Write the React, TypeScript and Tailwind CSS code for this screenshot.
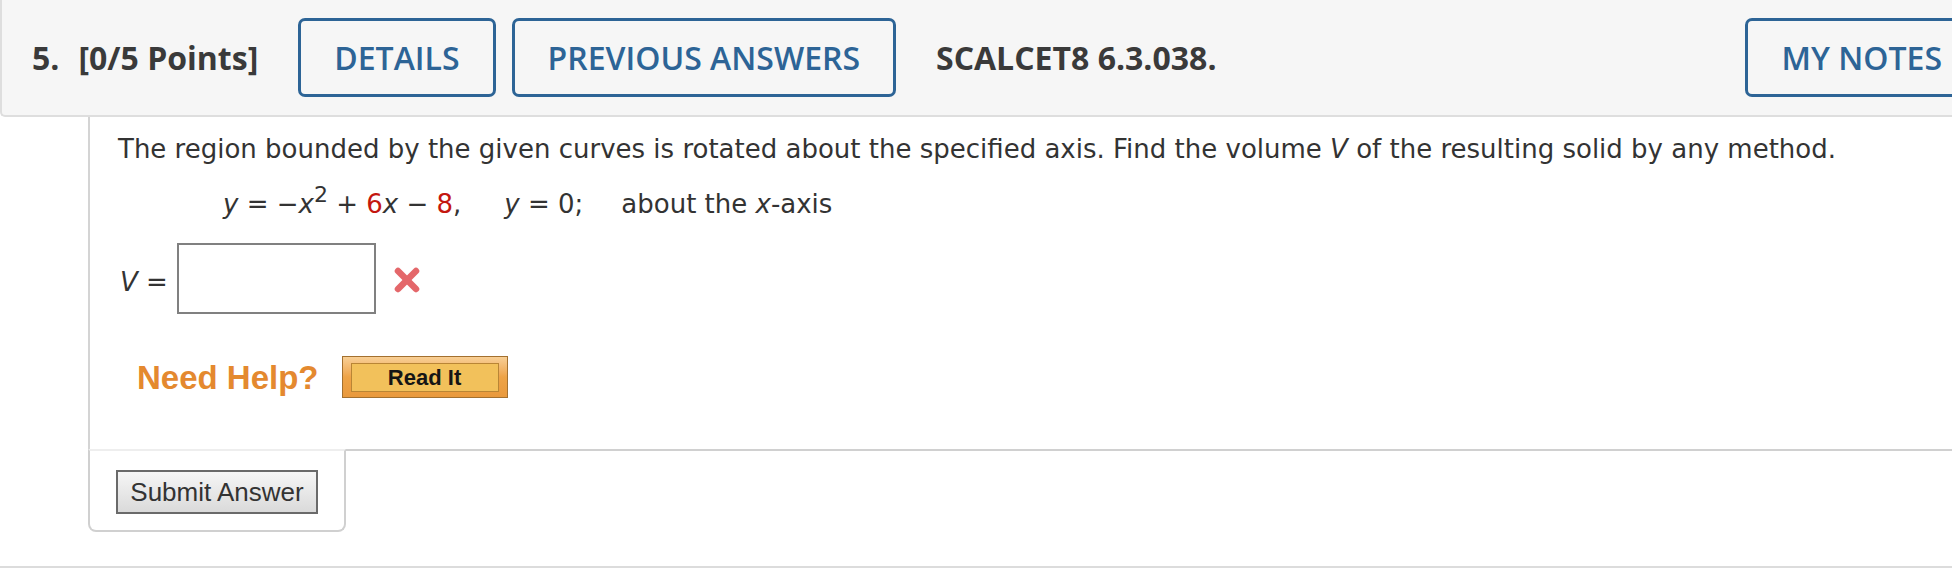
export default function App() {
  return (
    <div className="w-[1952px] h-[568px] bg-white overflow-hidden">
      {/* Header */}
      <header className="w-[2000px] h-[117px] bg-[#f6f6f6] border-l-2 border-b-2 border-[#dedede] rounded-bl-[5px] flex items-center pl-[30px] pr-[22px] font-['Open_Sans',sans-serif] text-[#3a3a3a]">
        <span className="text-[32px] font-bold">5.</span>
        <span className="text-[32px] font-bold ml-[19px]">[0/5 Points]</span>
        <button className="ml-[40px] h-[79px] px-[33px] border-[3px] border-[#2d6496] rounded-[7px] text-[#2d6496] text-[32px] font-semibold">
          DETAILS
        </button>
        <button className="ml-[16px] h-[79px] px-[33px] border-[3px] border-[#2d6496] rounded-[7px] text-[#2d6496] text-[32px] font-semibold">
          PREVIOUS ANSWERS
        </button>
        <span className="ml-[40px] text-[32px] font-bold">SCALCET8 6.3.038.</span>
        <div className="flex-1" />
        <button className="h-[79px] px-[33px] border-[3px] border-[#2d6496] rounded-[7px] text-[#2d6496] text-[32px] font-semibold">
          MY NOTES
        </button>
      </header>

      {/* Question body */}
      <div className="ml-[88px] h-[332px] border-l-2 border-[#d4d4d4] pl-[28px] font-['DejaVu_Sans',sans-serif] text-[#333] text-[26px] leading-[30px]">
        <p className="pt-[17px] whitespace-nowrap">
          The region bounded by the given curves is rotated about the specified axis. Find the volume <i>V</i> of the resulting solid by any method.
        </p>
        <p className="mt-[25px] ml-[105px] whitespace-nowrap">
          <i>y</i> = −<i>x</i>
          <span className="relative top-[-11px] text-[22px] leading-none">2</span> + <span className="text-[#c4170f]">6</span>
          <i>x</i> − <span className="text-[#c4170f]">8</span>,<span className="inline-block w-[43px]" />
          <i>y</i> = 0;<span className="inline-block w-[38px]" />about the <i>x</i>-axis
        </p>
        <div className="mt-[24px] flex items-center h-[71px]">
          <span className="ml-[2px] mt-[6px]"><i>V</i> =</span>
          <div className="ml-[9px] w-[199px] h-[71px] border-2 border-[#808080] bg-white" />
          <svg className="ml-[17px] mt-[3px]" width="28" height="28" viewBox="0 0 28 28">
            <g stroke="#e4676a" strokeWidth="6.5" strokeLinecap="round">
              <line x1="5" y1="5" x2="23" y2="23" />
              <line x1="23" y1="5" x2="5" y2="23" />
            </g>
          </svg>
        </div>
        <div className="mt-[42px] ml-[19px] flex items-center">
          <span className="font-['Liberation_Sans',Arial,sans-serif] font-bold text-[33px] leading-none text-[#e4892f]">
            Need Help?
          </span>
          <div className="ml-[23px] w-[166px] h-[42px] border border-[#a3702f] bg-gradient-to-b from-[#f8cf95] via-[#eea346] to-[#e9993d] pl-[8px] pr-[8px] pt-[6px] pb-[5px] flex">
            <div className="flex-1 border border-[#b98535] bg-[#f2c15b] flex items-center justify-center font-['Liberation_Sans',Arial,sans-serif] font-bold text-[22px] leading-none text-[#151515]">
              Read It
            </div>
          </div>
        </div>
      </div>

      {/* Submit row */}
      <div className="flex">
        <div className="ml-[88px] w-[258px] h-[83px] border-l-2 border-r-2 border-b-2 border-t-2 border-t-[#eeeeee] border-[#d0d0d0] rounded-b-[8px] pl-[26px] pt-[19px]">
          <button className="w-[202px] h-[44px] border-2 border-[#6a6a6a] bg-gradient-to-b from-[#f6f6f6] to-[#dadada] font-['Liberation_Sans',Arial,sans-serif] text-[26px] leading-none text-[#333]">
            Submit Answer
          </button>
        </div>
        <div className="flex-1 border-t-2 border-[#d0d0d0]" />
      </div>

      <div className="mt-[34px] h-[2px] bg-[#dcdcdc]" />
    </div>
  );
}
